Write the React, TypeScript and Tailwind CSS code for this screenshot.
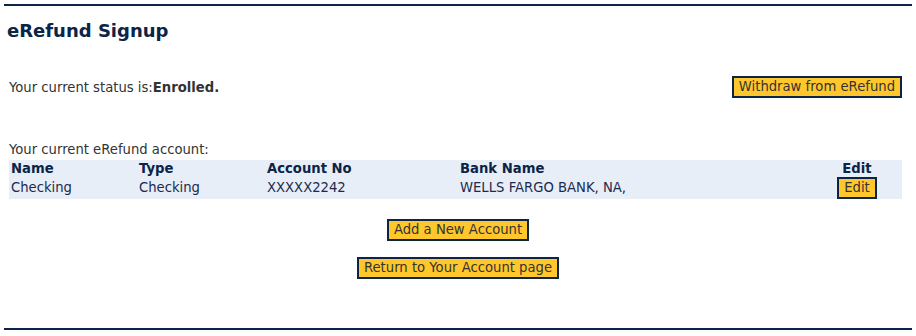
export default function App() {
  const btn =
    "bg-[#ffc72c] border-2 border-[#0b2447] text-[#333] text-[13.2px] leading-[18px] px-[5px]";

  return (
    <div className="w-[916px] h-[336px] bg-white font-['DejaVu_Sans',Verdana,sans-serif] text-[13.2px] text-[#333] flex flex-col">
      <div className="mx-[4px] mt-[4px] h-[2px] bg-[#0b2447]" />

      <h1 className="ml-[7px] mt-[13px] text-[18px] leading-[24px] font-bold text-[#0b2447]">
        eRefund Signup
      </h1>

      <div className="ml-[9px] mr-[14px] mt-[33px] flex items-center justify-between">
        <p className="pt-[2px]">
          Your current status is:<span className="font-bold">Enrolled.</span>
        </p>
        <button className={btn}>Withdraw from eRefund</button>
      </div>

      <p className="ml-[9px] mt-[44px] leading-[16px]">Your current eRefund account:</p>

      <div className="ml-[9px] mr-[14px] mt-[2px] bg-[#e8eef8] grid grid-cols-[130px_128px_193px_1fr_90px]">
        <div className="pl-[2px] font-bold text-[#0b2447] leading-[17px]">Name</div>
        <div className="font-bold text-[#0b2447] leading-[17px]">Type</div>
        <div className="font-bold text-[#0b2447] leading-[17px]">Account No</div>
        <div className="font-bold text-[#0b2447] leading-[17px]">Bank Name</div>
        <div className="font-bold text-[#0b2447] leading-[17px] text-center">Edit</div>

        <div className="pl-[2px] text-[#1a2b4c] flex items-center">Checking</div>
        <div className="text-[#1a2b4c] flex items-center">Checking</div>
        <div className="text-[#1a2b4c] flex items-center">XXXXX2242</div>
        <div className="text-[#1a2b4c] flex items-center">WELLS FARGO BANK, NA,</div>
        <div className="flex justify-center">
          <button className={btn}>Edit</button>
        </div>
      </div>

      <div className="mt-[20px] flex flex-col items-center gap-[16px]">
        <button className={btn}>Add a New Account</button>
        <button className={btn}>Return to Your Account page</button>
      </div>

      <div className="mx-[4px] mt-auto mb-[6px] h-[2px] bg-[#0b2447]" />
    </div>
  );
}
